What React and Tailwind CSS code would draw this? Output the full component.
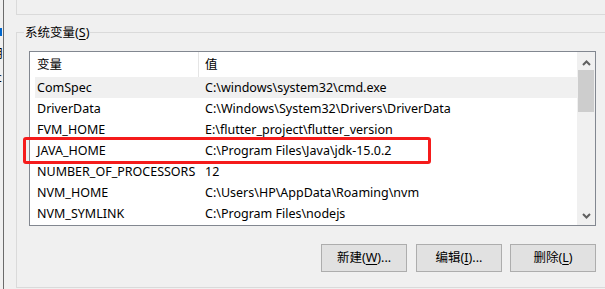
import React from "react";

const rows = [
  ["ComSpec", "C:\\windows\\system32\\cmd.exe"],
  ["DriverData", "C:\\Windows\\System32\\Drivers\\DriverData"],
  ["FVM_HOME", "E:\\flutter_project\\flutter_version"],
  ["JAVA_HOME", "C:\\Program Files\\Java\\jdk-15.0.2"],
  ["NUMBER_OF_PROCESSORS", "12"],
  ["NVM_HOME", "C:\\Users\\HP\\AppData\\Roaming\\nvm"],
  ["NVM_SYMLINK", "C:\\Program Files\\nodejs"],
];

function Chevron({ up }) {
  return (
    <svg width="9" height="6" viewBox="0 0 9 6">
      <path
        d={up ? "M1 5 L4.5 1.5 L8 5" : "M1 1 L4.5 4.5 L8 1"}
        fill="none"
        stroke="#606060"
        strokeWidth="2"
      />
    </svg>
  );
}

function Btn({ pre, key2, post }) {
  return (
    <div className="w-[86px] h-[28px] shrink-0 bg-[#e1e1e1] border border-[#adadad] flex items-center justify-center pt-[1px] text-[12.5px] text-black">
      {pre}(<span className="underline underline-offset-2">{key2}</span>){post}
    </div>
  );
}

export default function App() {
  return (
    <div
      className="w-[605px] h-[289px] bg-[#f0f0f0] flex overflow-hidden relative text-black"
      style={{ fontFamily: '"Noto Sans", "Noto Sans CJK SC", sans-serif' }}
    >
      <div className="w-[3px] shrink-0 h-full relative overflow-hidden text-[12px]">
        <div className="absolute left-0 top-[28px] w-[2px] h-[8px] bg-[#0066cc]" />
        <div className="absolute left-[-9px] top-[48px] leading-none">用</div>
        <div className="absolute left-[-4px] top-[72px] leading-none">c</div>
      </div>
      <div className="w-px shrink-0 h-full bg-[#6b6b6b]" />
      <div className="flex flex-col pl-[12px] shrink-0">
        <div className="w-[620px] h-[15px] shrink-0 border-l border-b border-[#dadada]" />
        <div className="mt-[17px] relative w-[620px] h-[256px] shrink-0 border border-[#dadada] pl-[12px] pt-[18px]">
          <div className="absolute left-[7px] top-[-9px] px-[1px] bg-[#f0f0f0] text-[12.5px] leading-[18px]">
            系统变量(<span className="underline underline-offset-2">S</span>)
          </div>
          <div className="w-[567px] h-[175px] border border-[#828790] bg-white flex">
            <div className="flex-1 flex flex-col text-[12.5px]">
              <div className="h-[25px] flex shrink-0">
                <div className="w-[168px] shrink-0 pl-[7px] pt-[2px] flex items-center">变量</div>
                <div className="w-px shrink-0 bg-[#e5e5e5]" />
                <div className="pl-[6px] pt-[2px] flex items-center">值</div>
              </div>
              <div className="pl-[5px] flex flex-col">
                {rows.map(([k, v], i) => (
                  <div
                    key={k}
                    className={
                      "h-[21px] shrink-0 flex items-center pt-[2px] whitespace-nowrap " +
                      (i === 0 ? "bg-[#f0f0f0]" : "")
                    }
                  >
                    <div className="w-[170px] shrink-0 pl-[2px]">{k}</div>
                    <div>{v}</div>
                  </div>
                ))}
              </div>
            </div>
            <div className="w-[18px] shrink-0 bg-[#f0f0f0] flex flex-col">
              <div className="h-[18px] flex items-center justify-center pt-[3px]">
                <Chevron up />
              </div>
              <div className="h-[42px] mx-[1px] bg-[#cdcdcd]" />
              <div className="flex-1" />
              <div className="h-[17px] flex items-center justify-center pb-[1px]">
                <Chevron />
              </div>
            </div>
          </div>
          <div className="w-[567px] mt-[18px] flex justify-end">
            <Btn pre="新建" key2="W" post="..." />
            <div className="w-[9px] shrink-0" />
            <Btn pre="编辑" key2="I" post="..." />
            <div className="w-[8px] shrink-0" />
            <Btn pre="删除" key2="L" post="" />
          </div>
        </div>
      </div>
      <div className="absolute left-[23px] top-[137px] w-[408px] h-[27px] border-[3px] border-[#f51b1b] rounded-[3px]" />
    </div>
  );
}
